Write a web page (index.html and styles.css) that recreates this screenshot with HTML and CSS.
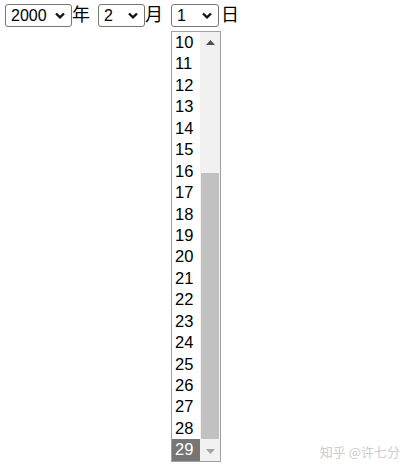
FILE: index.html
```html
<!DOCTYPE html>
<html lang="zh-CN">
<head>
    <meta charset="UTF-8">
    <meta name="viewport" content="width=device-width, initial-scale=1.0">
    <title>日期选择</title>
    <link rel="stylesheet" href="styles.css">
</head>
<body>
    <div class="date-picker">
        <div class="select year">
            <span class="value">2000</span>
            <svg class="chevron" width="10" height="7" viewBox="0 0 10 7"><path d="M1 1.5 L5 5.3 L9 1.5" fill="none" stroke="#111" stroke-width="2.4"/></svg>
        </div>
        <span class="unit">年</span>
        <div class="select month">
            <span class="value">2</span>
            <svg class="chevron" width="10" height="7" viewBox="0 0 10 7"><path d="M1 1.5 L5 5.3 L9 1.5" fill="none" stroke="#111" stroke-width="2.4"/></svg>
        </div>
        <span class="unit">月</span>
        <div class="field">
            <div class="select day">
                <span class="value">1</span>
                <svg class="chevron" width="10" height="7" viewBox="0 0 10 7"><path d="M1 1.5 L5 5.3 L9 1.5" fill="none" stroke="#111" stroke-width="2.4"/></svg>
            </div>
            <div class="options">
                <ul class="option-list">
                    <li>10</li>
                    <li>11</li>
                    <li>12</li>
                    <li>13</li>
                    <li>14</li>
                    <li>15</li>
                    <li>16</li>
                    <li>17</li>
                    <li>18</li>
                    <li>19</li>
                    <li>20</li>
                    <li>21</li>
                    <li>22</li>
                    <li>23</li>
                    <li>24</li>
                    <li>25</li>
                    <li>26</li>
                    <li>27</li>
                    <li>28</li>
                    <li class="selected">29</li>
                </ul>
                <div class="scrollbar">
                    <div class="arrow"><svg width="9" height="5" viewBox="0 0 9 5"><path d="M0 5 L4.5 0 L9 5 Z" fill="#505050"/></svg></div>
                    <div class="track"><div class="thumb"></div></div>
                    <div class="arrow"><svg width="9" height="5" viewBox="0 0 9 5"><path d="M0 0 L4.5 5 L9 0 Z" fill="#a3a3a3"/></svg></div>
                </div>
            </div>
        </div>
        <span class="unit">日</span>
    </div>

    <div class="watermark">知乎 @许七分</div>
</body>
</html>
```

FILE: styles.css
```css
body {
    margin: 0;
    padding: 4px 5px;
    font-family: "Liberation Sans", Arial, "Noto Sans CJK SC", sans-serif;
    background-color: #fff;
    color: #000;
}
.date-picker {
    display: flex;
    align-items: flex-start;
}
.select {
    box-sizing: border-box;
    height: 23px;
    display: flex;
    align-items: center;
    justify-content: space-between;
    padding: 0 6px 0 5px;
    border: 1px solid #767676;
    border-radius: 3px;
    background-color: #fff;
    font-size: 16px;
}
.select .value {
    line-height: 1;
}
.chevron {
    display: block;
}
.year {
    width: 67px;
}
.month {
    width: 47px;
}
.day {
    width: 48px;
}
.unit {
    font-size: 18px;
    margin-left: 0;
    margin-right: 8px;
    line-height: 23px;
}
.unit:last-child {
    margin-right: 0;
}
.field {
    display: flex;
    flex-direction: column;
    gap: 4px;
}
/* the open list of the day select */
.options {
    width: 50px;
    height: 431px;
    box-sizing: border-box;
    border: 1px solid #a0a0a0;
    background-color: #fff;
    display: flex;
}
.option-list {
    list-style: none;
    margin: 0;
    padding: 0;
    flex: 1;
}
.option-list li {
    height: 21.45px;
    line-height: 21.45px;
    padding-left: 3px;
    font-size: 16.5px;
}
.option-list li.selected {
    background-color: #767676;
    color: #fff;
}
.scrollbar {
    width: 20px;
    background-color: #f1f1f1;
    display: flex;
    flex-direction: column;
}
.arrow {
    height: 20px;
    display: flex;
    align-items: center;
    justify-content: center;
}
.track {
    flex: 1;
    display: flex;
    flex-direction: column;
    justify-content: flex-end;
    padding: 0 1px 2px 1px;
}
.thumb {
    height: 266px;
    background-color: #c1c1c1;
}
.watermark {
    position: absolute;
    right: 12px;
    bottom: 12px;
    font-size: 13px;
    color: #cdcdcd;
    font-family: "Noto Sans CJK SC", sans-serif;
}
```
